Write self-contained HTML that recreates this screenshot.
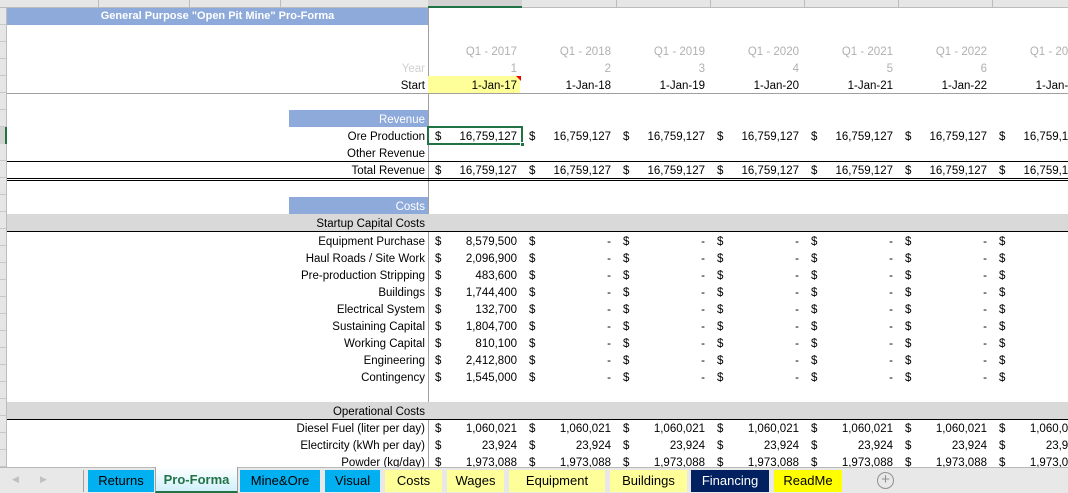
<!DOCTYPE html>
<html><head><meta charset="utf-8"><style>
*{margin:0;padding:0;box-sizing:border-box}
body{width:1068px;height:493px;overflow:hidden;background:#fff;font-family:"Liberation Sans",Arial,sans-serif;font-size:11.5px;color:#000;position:relative}
.a{position:absolute}
.r{position:absolute;left:0;height:17px;line-height:17px;display:flex;white-space:nowrap;transform:translateY(2px)}
.l{width:428px;text-align:right;padding-right:3px}
.c{width:94px;position:relative;text-align:right;padding-right:5px}
.c i{font-style:normal;position:absolute;left:7px}
.g{color:#b0b0b0}
.tab{position:absolute;top:470px;height:22px;line-height:21px;text-align:center;font-size:13px}
</style></head><body>
<!-- column header -->
<div class="a" style="left:0;top:0;width:1068px;height:8px;background:#e6e6e6;border-bottom:1px solid #bcbcbc"></div>
<div class="a" style="left:98px;top:0;width:1px;height:8px;background:#bcbcbc"></div>
<div class="a" style="left:189px;top:0;width:1px;height:8px;background:#bcbcbc"></div>
<div class="a" style="left:280px;top:0;width:1px;height:8px;background:#bcbcbc"></div>
<div class="a" style="left:428px;top:0;width:94px;height:8px;background:#d2d2d2;border-bottom:2px solid #217346"></div>
<div class="a" style="left:616px;top:0;width:1px;height:8px;background:#bcbcbc"></div>
<div class="a" style="left:710px;top:0;width:1px;height:8px;background:#bcbcbc"></div>
<div class="a" style="left:804px;top:0;width:1px;height:8px;background:#bcbcbc"></div>
<div class="a" style="left:898px;top:0;width:1px;height:8px;background:#bcbcbc"></div>
<div class="a" style="left:992px;top:0;width:1px;height:8px;background:#bcbcbc"></div>
<!-- row header -->
<div class="a" style="left:0;top:8px;width:7px;height:459px;background:#e6e6e6;border-right:1px solid #bcbcbc;background-image:repeating-linear-gradient(#e6e6e6 0,#e6e6e6 16px,#c8c8c8 16px,#c8c8c8 17px)"></div>
<div class="a" style="left:0;top:127px;width:7px;height:17px;background:#d2d2d2;border-right:2px solid #217346"></div>
<!-- title -->
<div class="a" style="left:7px;top:8px;width:421px;height:17px;background:#8eaadb;color:#fff;font-weight:bold;font-size:11px;line-height:17px;text-align:center">General Purpose "Open Pit Mine" Pro-Forma</div>
<!-- lines -->
<div class="a" style="left:428px;top:8px;width:1px;height:459px;background:#a0a0a0"></div>
<div class="a" style="left:7px;top:93px;width:1061px;height:1px;background:#a0a0a0"></div>
<div class="a" style="left:7px;top:161px;width:1061px;height:1px;background:#000"></div>
<div class="a" style="left:7px;top:178px;width:1061px;height:1px;background:#000"></div>
<div class="a" style="left:7px;top:180px;width:1061px;height:1px;background:#000"></div>
<div class="a" style="left:289px;top:110px;width:139px;height:17px;background:#8eaadb"></div>
<div class="a" style="left:289px;top:197px;width:139px;height:17px;background:#8eaadb"></div>
<div class="a" style="left:7px;top:214px;width:1061px;height:17px;background:#d9d9d9"></div>
<div class="a" style="left:7px;top:231px;width:1061px;height:1px;background:#000"></div>
<div class="a" style="left:7px;top:402px;width:1061px;height:17px;background:#d9d9d9"></div>
<div class="a" style="left:7px;top:419px;width:1061px;height:1px;background:#000"></div>
<div class="a" style="left:428px;top:76px;width:92px;height:17px;background:#ffff99"></div>
<div class="a" style="left:516px;top:76px;width:0;height:0;border-top:5px solid #e00;border-left:5px solid transparent"></div>

<div class="r g" style="top:42px"><div class="l"></div><div class="c">Q1 - 2017</div><div class="c">Q1 - 2018</div><div class="c">Q1 - 2019</div><div class="c">Q1 - 2020</div><div class="c">Q1 - 2021</div><div class="c">Q1 - 2022</div><div class="c">Q1 - 2023</div></div>
<div class="r g" style="top:59px"><div class="l" style="color:#d0d0d0">Year</div><div class="c">1</div><div class="c">2</div><div class="c">3</div><div class="c">4</div><div class="c">5</div><div class="c">6</div><div class="c">7</div></div>
<div class="r" style="top:76px"><div class="l">Start</div><div class="c">1-Jan-17</div><div class="c">1-Jan-18</div><div class="c">1-Jan-19</div><div class="c">1-Jan-20</div><div class="c">1-Jan-21</div><div class="c">1-Jan-22</div><div class="c">1-Jan-23</div></div>
<div class="r" style="top:110px"><div class="l" style="color:#fff">Revenue</div></div>
<div class="r" style="top:127px"><div class="l">Ore Production</div><div class="c"><i>$</i>16,759,127</div><div class="c"><i>$</i>16,759,127</div><div class="c"><i>$</i>16,759,127</div><div class="c"><i>$</i>16,759,127</div><div class="c"><i>$</i>16,759,127</div><div class="c"><i>$</i>16,759,127</div><div class="c"><i>$</i>16,759,127</div></div>
<div class="a" style="left:427px;top:126px;width:96px;height:19px;border:2px solid #217346"></div>
<div class="a" style="left:520px;top:142px;width:5px;height:5px;background:#217346;border:1px solid #fff"></div>
<div class="r" style="top:144px"><div class="l">Other Revenue</div></div>
<div class="r" style="top:161px"><div class="l">Total Revenue</div><div class="c"><i>$</i>16,759,127</div><div class="c"><i>$</i>16,759,127</div><div class="c"><i>$</i>16,759,127</div><div class="c"><i>$</i>16,759,127</div><div class="c"><i>$</i>16,759,127</div><div class="c"><i>$</i>16,759,127</div><div class="c"><i>$</i>16,759,127</div></div>
<div class="r" style="top:197px"><div class="l" style="color:#fff">Costs</div></div>
<div class="r" style="top:214px"><div class="l">Startup Capital Costs</div></div>
<div class="r" style="top:232px"><div class="l">Equipment Purchase</div><div class="c"><i>$</i>8,579,500</div><div class="c"><i>$</i>-</div><div class="c"><i>$</i>-</div><div class="c"><i>$</i>-</div><div class="c"><i>$</i>-</div><div class="c"><i>$</i>-</div><div class="c"><i>$</i>-</div></div>
<div class="r" style="top:249px"><div class="l">Haul Roads / Site Work</div><div class="c"><i>$</i>2,096,900</div><div class="c"><i>$</i>-</div><div class="c"><i>$</i>-</div><div class="c"><i>$</i>-</div><div class="c"><i>$</i>-</div><div class="c"><i>$</i>-</div><div class="c"><i>$</i>-</div></div>
<div class="r" style="top:266px"><div class="l">Pre-production Stripping</div><div class="c"><i>$</i>483,600</div><div class="c"><i>$</i>-</div><div class="c"><i>$</i>-</div><div class="c"><i>$</i>-</div><div class="c"><i>$</i>-</div><div class="c"><i>$</i>-</div><div class="c"><i>$</i>-</div></div>
<div class="r" style="top:283px"><div class="l">Buildings</div><div class="c"><i>$</i>1,744,400</div><div class="c"><i>$</i>-</div><div class="c"><i>$</i>-</div><div class="c"><i>$</i>-</div><div class="c"><i>$</i>-</div><div class="c"><i>$</i>-</div><div class="c"><i>$</i>-</div></div>
<div class="r" style="top:300px"><div class="l">Electrical System</div><div class="c"><i>$</i>132,700</div><div class="c"><i>$</i>-</div><div class="c"><i>$</i>-</div><div class="c"><i>$</i>-</div><div class="c"><i>$</i>-</div><div class="c"><i>$</i>-</div><div class="c"><i>$</i>-</div></div>
<div class="r" style="top:317px"><div class="l">Sustaining Capital</div><div class="c"><i>$</i>1,804,700</div><div class="c"><i>$</i>-</div><div class="c"><i>$</i>-</div><div class="c"><i>$</i>-</div><div class="c"><i>$</i>-</div><div class="c"><i>$</i>-</div><div class="c"><i>$</i>-</div></div>
<div class="r" style="top:334px"><div class="l">Working Capital</div><div class="c"><i>$</i>810,100</div><div class="c"><i>$</i>-</div><div class="c"><i>$</i>-</div><div class="c"><i>$</i>-</div><div class="c"><i>$</i>-</div><div class="c"><i>$</i>-</div><div class="c"><i>$</i>-</div></div>
<div class="r" style="top:351px"><div class="l">Engineering</div><div class="c"><i>$</i>2,412,800</div><div class="c"><i>$</i>-</div><div class="c"><i>$</i>-</div><div class="c"><i>$</i>-</div><div class="c"><i>$</i>-</div><div class="c"><i>$</i>-</div><div class="c"><i>$</i>-</div></div>
<div class="r" style="top:368px"><div class="l">Contingency</div><div class="c"><i>$</i>1,545,000</div><div class="c"><i>$</i>-</div><div class="c"><i>$</i>-</div><div class="c"><i>$</i>-</div><div class="c"><i>$</i>-</div><div class="c"><i>$</i>-</div><div class="c"><i>$</i>-</div></div>
<div class="r" style="top:402px"><div class="l">Operational Costs</div></div>
<div class="r" style="top:419px"><div class="l">Diesel Fuel (liter per day)</div><div class="c"><i>$</i>1,060,021</div><div class="c"><i>$</i>1,060,021</div><div class="c"><i>$</i>1,060,021</div><div class="c"><i>$</i>1,060,021</div><div class="c"><i>$</i>1,060,021</div><div class="c"><i>$</i>1,060,021</div><div class="c"><i>$</i>1,060,021</div></div>
<div class="r" style="top:436px"><div class="l">Electircity (kWh per day)</div><div class="c"><i>$</i>23,924</div><div class="c"><i>$</i>23,924</div><div class="c"><i>$</i>23,924</div><div class="c"><i>$</i>23,924</div><div class="c"><i>$</i>23,924</div><div class="c"><i>$</i>23,924</div><div class="c"><i>$</i>23,924</div></div>
<div class="r" style="top:453px"><div class="l">Powder (kg/day)</div><div class="c"><i>$</i>1,973,088</div><div class="c"><i>$</i>1,973,088</div><div class="c"><i>$</i>1,973,088</div><div class="c"><i>$</i>1,973,088</div><div class="c"><i>$</i>1,973,088</div><div class="c"><i>$</i>1,973,088</div><div class="c"><i>$</i>1,973,088</div></div>

<!-- tab bar -->
<div class="a" style="left:0;top:467px;width:1068px;height:26px;background:#e8e8e8;border-top:1px solid #b8b8b8"></div>
<div class="a" style="left:12px;top:474px;color:#c0c0c0;font-size:9px">◀</div>
<div class="a" style="left:40px;top:474px;color:#c0c0c0;font-size:9px">▶</div>
<div class="a" style="left:83px;top:470px;width:1px;height:22px;background:#a0a0a0"></div>
<div class="tab" style="left:88px;width:66px;background:#00b0f0">Returns</div>
<div class="tab" style="left:155px;width:83px;top:467px;height:26px;line-height:25px;background:linear-gradient(#fff,#d0f0fb);color:#217346;font-weight:bold;border-bottom:2px solid #217346;border-left:1px solid #a0a0a0;border-right:1px solid #a0a0a0">Pro-Forma</div>
<div class="tab" style="left:240px;width:80px;background:#00b0f0">Mine&amp;Ore</div>
<div class="tab" style="left:325px;width:55px;background:#00b0f0">Visual</div>
<div class="tab" style="left:385px;width:57px;background:#ffff99">Costs</div>
<div class="tab" style="left:447px;width:57px;background:#ffff99">Wages</div>
<div class="tab" style="left:509px;width:96px;background:#ffff99">Equipment</div>
<div class="tab" style="left:610px;width:77px;background:#ffff99">Buildings</div>
<div class="tab" style="left:691px;width:78px;background:#002060;color:#fff">Financing</div>
<div class="tab" style="left:774px;width:68px;background:#ffff00">ReadMe</div>
<div class="a" style="left:877px;top:472px;width:17px;height:17px;border:1px solid #909090;border-radius:50%;color:#909090;text-align:center;line-height:14px;font-size:15px">+</div>
</body></html>
